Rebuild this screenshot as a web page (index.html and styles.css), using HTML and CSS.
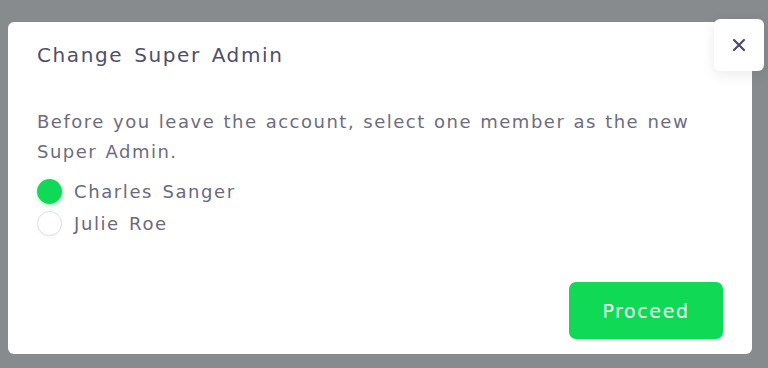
FILE: index.html
```html
<!DOCTYPE html>
<html>
<head>
<meta charset="utf-8">
<link rel="stylesheet" href="styles.css">
</head>
<body>
<div class="modal">
  <h2 class="title">Change Super Admin</h2>
  <p class="desc">Before you leave the account, select one member as the new Super Admin.</p>
  <div class="options">
    <label class="option"><span class="radio checked"></span><span class="name">Charles Sanger</span></label>
    <label class="option"><span class="radio"></span><span class="name">Julie Roe</span></label>
  </div>
  <div class="footer">
    <button class="proceed">Proceed</button>
  </div>
  <button class="close" aria-label="Close">
    <svg width="14" height="14" viewBox="0 0 14 14"><path d="M2 2 L12 12 M12 2 L2 12" stroke="#4b4a6b" stroke-width="2.2" stroke-linecap="round"/></svg>
  </button>
</div>
</body>
</html>
```
FILE: styles.css
```css
html, body {
  margin: 0;
  padding: 0;
}
body {
  width: 768px;
  height: 368px;
  background: #888b8d;
  font-family: "DejaVu Sans", "Open Sans", sans-serif;
  overflow: hidden;
}
.modal {
  position: relative;
  box-sizing: border-box;
  margin: 22px 0 0 8px;
  width: 744px;
  height: 332px;
  background: #ffffff;
  border-radius: 6px;
  padding: 18px 29px 0 29px;
  display: flex;
  flex-direction: column;
}
.title {
  margin: 0;
  font-size: 20px;
  font-weight: normal;
  line-height: 30px;
  color: #4f4e6b;
  letter-spacing: 1.6px;
  word-spacing: 3px;
}
.desc {
  margin: 37px 0 0 0;
  font-size: 18px;
  line-height: 30px;
  color: #6d6c7e;
  letter-spacing: 1.5px;
  word-spacing: 1px;
  width: 680px;
}
.options {
  margin-top: 12px;
  display: flex;
  flex-direction: column;
  gap: 8px;
}
.option {
  display: flex;
  align-items: center;
  gap: 12px;
  height: 24px;
}
.radio {
  box-sizing: border-box;
  width: 25px;
  height: 25px;
  border-radius: 50%;
  border: 1.5px solid #e0e0e4;
  background: #fff;
  box-shadow: 0 1px 3px rgba(0, 0, 0, 0.05);
}
.radio.checked {
  border: none;
  background: #10d956;
  box-shadow: 0 2px 5px rgba(16, 217, 86, 0.3);
}
.name {
  font-size: 18px;
  color: #6a6980;
  letter-spacing: 1.6px;
  word-spacing: 2px;
}
.footer {
  margin-top: auto;
  margin-bottom: 15px;
  display: flex;
  justify-content: flex-end;
}
.proceed {
  width: 154px;
  height: 57px;
  margin-right: 0;
  border: none;
  border-radius: 7px;
  background: #10d956;
  color: #f4fff6;
  font-family: "DejaVu Sans", "Open Sans", sans-serif;
  font-size: 19px;
  font-weight: normal;
  letter-spacing: 1.6px;
  cursor: pointer;
}
.close {
  position: absolute;
  top: -3px;
  right: -12px;
  width: 50px;
  height: 52px;
  border: none;
  border-radius: 6px;
  background: #fff;
  box-shadow: 0 4px 14px rgba(0, 0, 0, 0.08);
  display: flex;
  align-items: center;
  justify-content: center;
  padding: 0;
}
```
